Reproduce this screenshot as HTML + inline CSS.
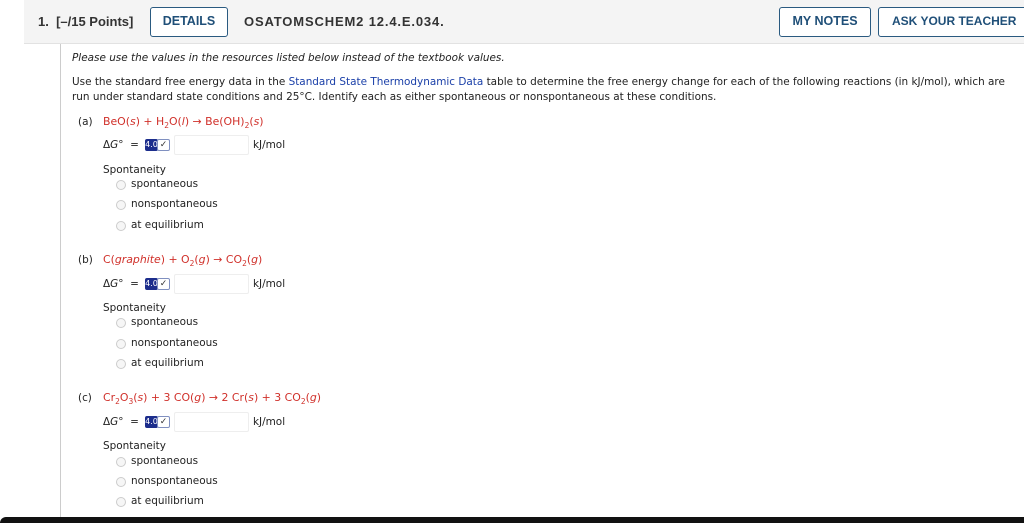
<!DOCTYPE html>
<html><head><meta charset="utf-8"><style>
*{margin:0;padding:0;box-sizing:border-box}
body{width:1024px;height:523px;overflow:hidden;background:#fff;font-family:"DejaVu Sans","Liberation Sans",sans-serif;font-size:10.45px;color:#222;position:relative}
.hdr{position:absolute;left:24px;top:0;width:1000px;height:44px;background:#f4f4f4;border-bottom:1px solid #e2e2e2}
.t{position:absolute;white-space:nowrap}
.btn{position:absolute;top:7px;height:30px;border:1.5px solid #2a5a80;border-radius:3px;background:#fff;color:#1f4f78;font-family:"Liberation Sans",sans-serif;font-weight:bold;font-size:13px;line-height:27px;text-align:center}
.vl{position:absolute;left:60px;top:44px;width:1px;height:474px;background:#ccc}
.red{color:#d0302a;position:absolute;left:25px;top:-1px;font-size:10.9px;letter-spacing:0}
sub{font-size:7.5px;vertical-align:-3px}
.blue{color:#1a3fa8}
.ico{position:absolute;width:25px;height:12px}
.ico .a{position:absolute;left:0;top:0;width:13px;height:12px;background:#1c2d8c;border-radius:2px;color:#fff;font-size:8px;line-height:12px;text-align:center}
.ico .b{position:absolute;left:12px;top:0;width:13px;height:12px;border:1px solid #8090c0;border-radius:2px;background:#fff;color:#333;font-size:9px;line-height:10px;text-align:center}
.inp{position:absolute;width:75px;height:20px;border:1px solid #eee;border-radius:2px;background:#fff}
.rad{position:absolute;width:10px;height:10px;border:1px solid #ccc;border-radius:50%;background:#f6f6f6}
.bot{position:absolute;left:0;top:517px;width:1024px;height:6px;background:#111;border-top-left-radius:6px}
</style></head><body>
<div class="hdr"></div>
<div class="t" style="left:38px;top:14px;font-family:'Liberation Sans',sans-serif;font-weight:bold;font-size:13px;color:#333">1.&nbsp; [–/15 Points]</div>
<div class="btn" style="left:150px;width:78px;font-size:12.5px">DETAILS</div>
<div class="t" style="left:244px;top:14px;font-family:'Liberation Sans',sans-serif;font-weight:bold;font-size:13px;color:#333;letter-spacing:0.85px">OSATOMSCHEM2 12.4.E.034.</div>
<div class="btn" style="left:779px;width:92px;font-size:12.5px">MY NOTES</div>
<div class="btn" style="left:878px;width:150px;font-size:12px;text-align:left;padding-left:13px">ASK YOUR TEACHER</div>
<div class="vl"></div>
<div class="t" style="left:72px;top:52px;font-style:italic">Please use the values in the resources listed below instead of the textbook values.</div>
<div class="t" style="left:72px;top:76px">Use the standard free energy data in the <span class="blue">Standard State Thermodynamic Data</span> table to determine the free energy change for each of the following reactions (in kJ/mol), which are</div>
<div class="t" style="left:72px;top:91px">run under standard state conditions and 25°C. Identify each as either spontaneous or nonspontaneous at these conditions.</div>

<div class="t" style="left:78px;top:116px">(a)<span class="red">BeO(<i>s</i>) + H<sub>2</sub>O(<i>l</i>) → Be(OH)<sub>2</sub>(<i>s</i>)</span></div>
<div class="t" style="left:78px;top:254px">(b)<span class="red">C(<i>graphite</i>) + O<sub>2</sub>(<i>g</i>) → CO<sub>2</sub>(<i>g</i>)</span></div>
<div class="t" style="left:78px;top:392px">(c)<span class="red">Cr<sub>2</sub>O<sub>3</sub>(<i>s</i>) + 3 CO(<i>g</i>) → 2 Cr(<i>s</i>) + 3 CO<sub>2</sub>(<i>g</i>)</span></div>

<div class="t" style="left:103px;top:139px">Δ<i>G</i>° &nbsp;=</div>
<div class="ico" style="left:145px;top:139px"><div class="a">4.0</div><div class="b">✓</div></div>
<div class="inp" style="left:174px;top:135px"></div>
<div class="t" style="left:253px;top:139px">kJ/mol</div>
<div class="t" style="left:103px;top:164px">Spontaneity</div>
<div class="rad" style="left:116px;top:180px"></div><div class="t" style="left:131px;top:178px">spontaneous</div>
<div class="rad" style="left:116px;top:200px"></div><div class="t" style="left:131px;top:198px">nonspontaneous</div>
<div class="rad" style="left:116px;top:221px"></div><div class="t" style="left:131px;top:219px">at equilibrium</div>

<div class="t" style="left:103px;top:278px">Δ<i>G</i>° &nbsp;=</div>
<div class="ico" style="left:145px;top:278px"><div class="a">4.0</div><div class="b">✓</div></div>
<div class="inp" style="left:174px;top:274px"></div>
<div class="t" style="left:253px;top:278px">kJ/mol</div>
<div class="t" style="left:103px;top:302px">Spontaneity</div>
<div class="rad" style="left:116px;top:318px"></div><div class="t" style="left:131px;top:316px">spontaneous</div>
<div class="rad" style="left:116px;top:339px"></div><div class="t" style="left:131px;top:337px">nonspontaneous</div>
<div class="rad" style="left:116px;top:359px"></div><div class="t" style="left:131px;top:357px">at equilibrium</div>

<div class="t" style="left:103px;top:416px">Δ<i>G</i>° &nbsp;=</div>
<div class="ico" style="left:145px;top:416px"><div class="a">4.0</div><div class="b">✓</div></div>
<div class="inp" style="left:174px;top:412px"></div>
<div class="t" style="left:253px;top:416px">kJ/mol</div>
<div class="t" style="left:103px;top:440px">Spontaneity</div>
<div class="rad" style="left:116px;top:457px"></div><div class="t" style="left:131px;top:455px">spontaneous</div>
<div class="rad" style="left:116px;top:477px"></div><div class="t" style="left:131px;top:475px">nonspontaneous</div>
<div class="rad" style="left:116px;top:497px"></div><div class="t" style="left:131px;top:495px">at equilibrium</div>

<div class="bot"></div>
</body></html>
